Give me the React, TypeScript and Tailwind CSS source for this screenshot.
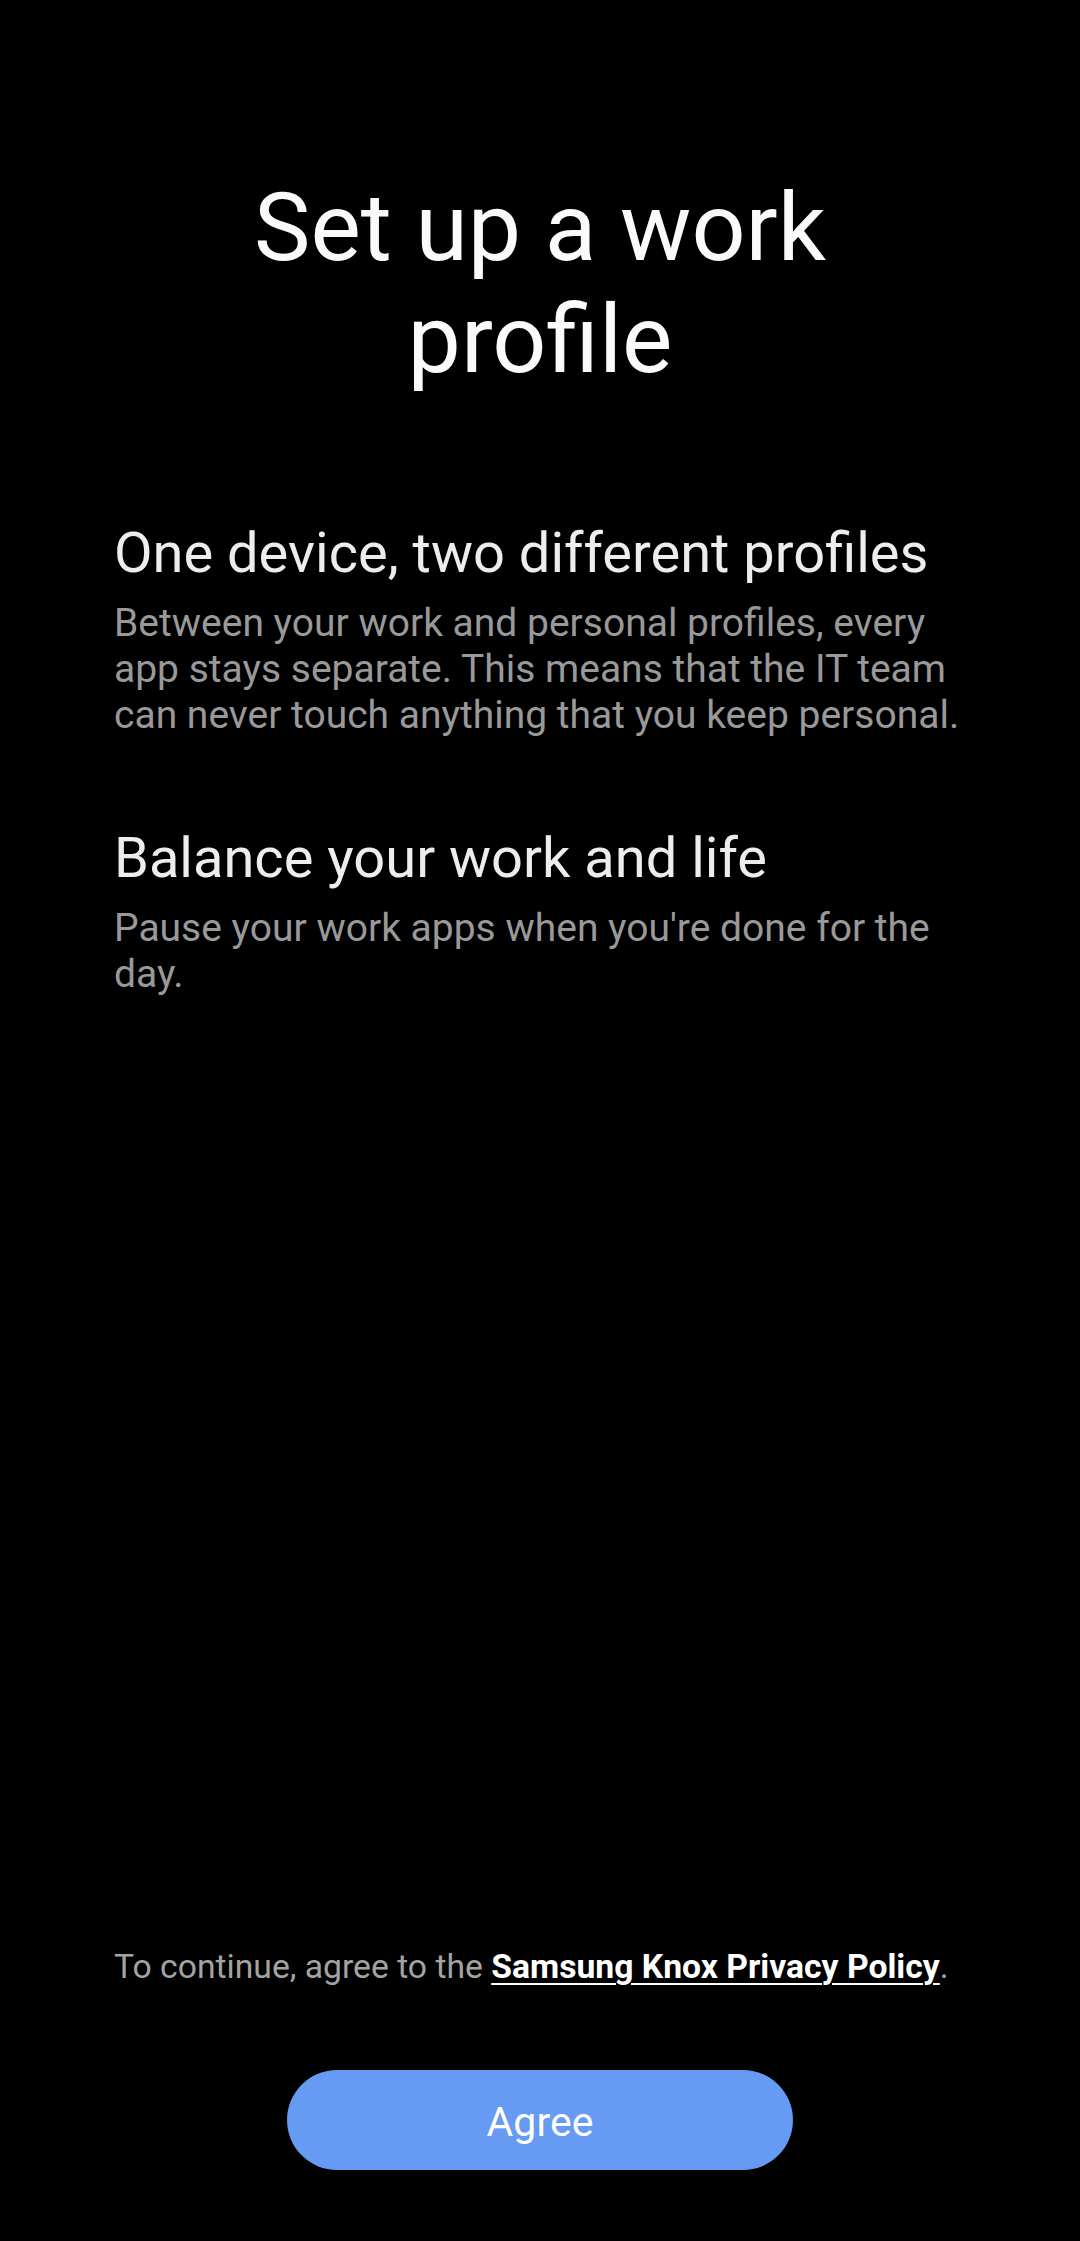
import React from "react";

export default function App() {
  return (
    <div
      className="flex h-[2241px] w-[1080px] flex-col bg-black"
      style={{ fontFamily: "Roboto, 'Noto Sans', sans-serif" }}
    >
      <h1 className="px-[114px] pt-[172px] text-center text-[95px] font-normal leading-[112px] text-[#fafafa]">
        Set up a work
        <br />
        profile
      </h1>

      <div className="mt-[124px] flex flex-col gap-[87px] px-[114px]">
        <section className="flex flex-col gap-[14px]">
          <h2 className="text-[56px] font-normal leading-[66px] text-[#ededed]">
            One device, two different profiles
          </h2>
          <p className="text-[39px] leading-[46px] text-[#999999]">
            Between your work and personal profiles, every app stays separate. This means that the IT team can never touch anything that you keep personal.
          </p>
        </section>
        <section className="flex flex-col gap-[14px]">
          <h2 className="text-[56px] font-normal leading-[66px] text-[#ededed]">
            Balance your work and life
          </h2>
          <p className="text-[39px] leading-[46px] text-[#999999]">
            Pause your work apps when you're done for the day.
          </p>
        </section>
      </div>

      <div className="flex-1" />

      <p className="px-[114px] text-[33.7px] leading-[46px] text-[#a3a3a3]">
        To continue, agree to the{" "}
        <span className="font-bold text-white underline decoration-[2px] underline-offset-[5px]">
          Samsung Knox Privacy Policy
        </span>
        .
      </p>

      <div className="mt-[80px] mb-[71px] flex justify-center">
        <button className="flex h-[100px] w-[506px] items-center justify-center rounded-full bg-[#669af3] pt-[5px] text-[41px] text-white">
          Agree
        </button>
      </div>
    </div>
  );
}
